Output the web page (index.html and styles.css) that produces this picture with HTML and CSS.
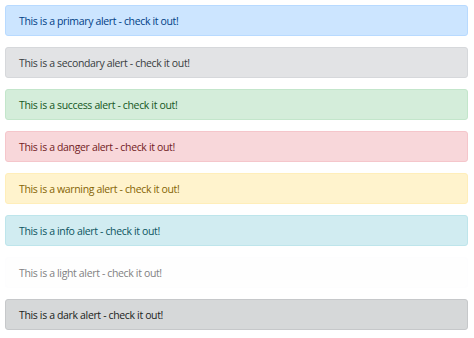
FILE: index.html
```html
<!DOCTYPE html>
<html>
  <head>
    <meta charset="utf-8" />
    <title>Alerts</title>
    <meta name="viewport" content="width=device-width, initial-scale=1" />
    <link rel="stylesheet" href="styles.css">
  </head>
  <body>
    <div class="container">
      <div class="alert alert-primary">This is a primary alert - check it out!</div>
      <div class="alert alert-secondary">This is a secondary alert - check it out!</div>
      <div class="alert alert-success">This is a success alert - check it out!</div>
      <div class="alert alert-danger">This is a danger alert - check it out!</div>
      <div class="alert alert-warning">This is a warning alert - check it out!</div>
      <div class="alert alert-info">This is a info alert - check it out!</div>
      <div class="alert alert-light">This is a light alert - check it out!</div>
      <div class="alert alert-dark">This is a dark alert - check it out!</div>
    </div>
  </body>
</html>
```

FILE: styles.css
```css
body {
  margin: 0;
  font-family: "Open Sans", "Noto Sans", sans-serif;
  font-size: 10.5px;
  letter-spacing: -0.35px;
  background-color: white;
}

.container {
  display: flex;
  flex-direction: column;
  gap: 11px;
  padding: 5px 6px 0 5px;
}

.alert {
  height: 31px;
  box-sizing: border-box;
  display: flex;
  align-items: center;
  padding: 1px 13px 0;
  border: 1px solid transparent;
  border-radius: 3px;
}

.alert-primary {
  color: #004085;
  background-color: #cce5ff;
  border-color: #b8daff;
}

.alert-secondary {
  color: #383d41;
  background-color: #e2e3e5;
  border-color: #d6d8db;
}

.alert-success {
  color: #155724;
  background-color: #d4edda;
  border-color: #c3e6cb;
}

.alert-danger {
  color: #721c24;
  background-color: #f8d7da;
  border-color: #f5c6cb;
}

.alert-warning {
  color: #856404;
  background-color: #fff3cd;
  border-color: #ffeeba;
}

.alert-info {
  color: #0c5460;
  background-color: #d1ecf1;
  border-color: #bee5eb;
}

.alert-light {
  color: #818182;
  background-color: #fefefe;
  border-color: #fdfdfe;
}

.alert-dark {
  color: #1b1e21;
  background-color: #d6d8d9;
  border-color: #c6c8ca;
}
```
